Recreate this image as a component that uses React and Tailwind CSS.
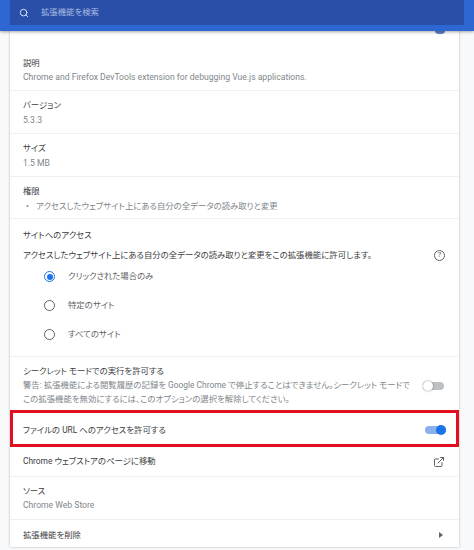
import { Search, ExternalLink } from 'lucide-react'

const FONT = "font-['Roboto','Noto_Sans_CJK_JP',sans-serif]"

function InfoRow({ label, children, height = 'h-[43px]', top = 'pt-0', labelLeading = 'leading-[16px]' }) {
  return (
    <div className={`${height} ${top} border-b border-[#f0f0f0] px-[13px] flex flex-col justify-center`}>
      <div className={`text-[#3c4043] ${labelLeading}`}>{label}</div>
      <div className="text-[#80868b] leading-[14px]">{children}</div>
    </div>
  )
}

function Radio({ checked, label }) {
  return (
    <div className="h-[29px] flex items-center pl-[34px] text-[#5f6368]">
      <span className={`w-[11px] h-[11px] rounded-full border-[1.5px] flex items-center justify-center ${checked ? 'border-[#1a73e8]' : 'border-[#5f6368]'}`}>
        {checked && <span className="w-[6px] h-[6px] rounded-full bg-[#1a73e8]" />}
      </span>
      <span className="ml-[13px]">{label}</span>
    </div>
  )
}

export default function App() {
  return (
    <div className={`${FONT} w-[474px] h-[550px] overflow-hidden bg-[#f8f9fa] text-[8.4px] [font-feature-settings:'palt'] relative`}>
      {/* ヘッダー */}
      <div className="h-[31px] bg-[#2e66d2] shadow-[0_1px_3px_rgba(0,0,0,0.35)] px-[10px] relative z-10">
        <div className="h-[25px] bg-[#2a4fa8] flex items-center pl-[9px] text-[#a9bbe2]">
          <Search size={10} strokeWidth={2.2} className="text-[#dfe7f7]" />
          <span className="ml-[12px]">拡張機能を検索</span>
        </div>
      </div>

      <div className="mx-[10px] w-[449px] bg-white shadow-[0_0_2px_rgba(60,64,67,0.4)] h-[516px] relative">
        {/* スクロールで隠れたトグル */}
        <span className="absolute right-[14px] -top-[4px] w-[10px] h-[7px] rounded-full bg-[#5f86c8]" />

        <div className="pt-[15px]">
          <InfoRow label="説明" height="h-[45px]" top="pt-[3px]" labelLeading="leading-[14px]">
            <span className="text-[8.6px]">Chrome and Firefox DevTools extension for debugging Vue.js applications.</span>
          </InfoRow>
          <InfoRow label="バージョン"><span className="text-[8.6px]">5.3.3</span></InfoRow>
          <InfoRow label="サイズ"><span className="text-[8.6px]">1.5 MB</span></InfoRow>
          <InfoRow label="権限" height="h-[42px]">
            <span className="inline-block w-[13px] pl-[3px]">•</span>アクセスしたウェブサイト上にある自分の全データの読み取りと変更
          </InfoRow>

          <div className="h-[138px] border-b border-[#f0f0f0]">
            <div className="px-[13px] pt-[9px] text-[#3c4043] leading-[14px]">サイトへのアクセス</div>
            <div className="px-[13px] mt-[6px] flex items-center justify-between text-[#3c4043] leading-[14px]">
              <span>アクセスしたウェブサイト上にある自分の全データの読み取りと変更をこの拡張機能に許可します。</span>
              <span className="w-[11px] h-[11px] mr-[1px] rounded-full border border-[#5f6368] text-[#5f6368] text-[8px] leading-none flex items-center justify-center">?</span>
            </div>
            <div>
              <Radio checked label="クリックされた場合のみ" />
              <Radio label="特定のサイト" />
              <Radio label="すべてのサイト" />
            </div>
          </div>

          <div className="h-[53px] px-[13px] pt-[7px] flex items-start justify-between">
            <div className="w-[392px] leading-[14px]">
              <div className="text-[#3c4043]">シークレット モードでの実行を許可する</div>
              <div className="text-[#80868b]">警告: 拡張機能による閲覧履歴の記録を Google Chrome で停止することはできません。シークレット モードでこの拡張機能を無効にするには、このオプションの選択を解除してください。</div>
            </div>
            <span className="relative mt-[18px] mr-[2px] w-[21px] h-[8px] rounded-full bg-[#bdc1c6]">
              <span className="absolute left-0 -top-[1px] w-[10px] h-[10px] rounded-full bg-white shadow-[0_0_2px_rgba(0,0,0,0.5)]" />
            </span>
          </div>

          {/* 赤枠 */}
          <div className="h-[37px] border-[3px] border-[#e2101f] flex items-center justify-between pl-[10px] pr-[10px] pt-[3px] text-[#3c4043]">
            <span>ファイルの URL へのアクセスを許可する</span>
            <span className="relative w-[21px] h-[8px] rounded-full bg-[#8ab0ec]">
              <span className="absolute right-0 -top-[1px] w-[10px] h-[10px] rounded-full bg-[#1a73e8]" />
            </span>
          </div>

          <div className="h-[30px] border-b border-[#f0f0f0] px-[13px] flex items-center justify-between text-[#3c4043]">
            <span>Chrome ウェブストアのページに移動</span>
            <ExternalLink size={12} className="text-[#5f6368] mr-[1px]" />
          </div>
          <InfoRow label="ソース" labelLeading="leading-[14px]"><span className="text-[8.6px]">Chrome Web Store</span></InfoRow>
          <div className="h-[30px] px-[13px] flex items-center justify-between text-[#3c4043]">
            <span>拡張機能を削除</span>
            <svg width="4" height="6" viewBox="0 0 4 6" className="mr-[3px]"><path d="M0 0l4 3-4 3z" fill="#5f6368" /></svg>
          </div>
        </div>
      </div>
    </div>
  )
}
